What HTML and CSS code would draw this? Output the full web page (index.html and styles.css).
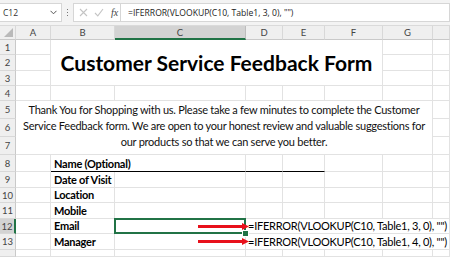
FILE: index.html
```html
<!DOCTYPE html>
<html>
<head>
<meta charset="utf-8">
<link rel="stylesheet" href="styles.css">
</head>
<body>
<div class="fbar">
  <div class="namebox"><span>C12</span><svg class="chev" width="7" height="5" viewBox="0 0 7 5"><path d="M0.5 0.8 L3.5 3.8 L6.5 0.8" fill="none" stroke="#555" stroke-width="1"/></svg></div>
  <div class="dots"><i></i><i></i><i></i></div>
  <div class="fbtns">
    <svg width="9" height="9" viewBox="0 0 9 9"><path d="M1 1 L8 8 M8 1 L1 8" stroke="#c4c4c4" stroke-width="1.1" fill="none"/></svg>
    <svg width="10" height="9" viewBox="0 0 10 9"><path d="M1 5 L3.8 7.8 L9 1" stroke="#c4c4c4" stroke-width="1.1" fill="none"/></svg>
    <span class="fx">fx</span>
  </div>
  <div class="finput">=IFERROR(VLOOKUP(C10, Table1, 3, 0), "")</div>
</div>
<div class="sheet">
  <div class="h corner"><span class="tri"></span></div>
  <div class="h">A</div><div class="h">B</div><div class="h sel">C</div><div class="h">D</div><div class="h">E</div><div class="h">F</div><div class="h">G</div><div class="h"></div>

  <div class="r">1</div><div class="c"></div><div class="c title">Customer Service Feedback Form</div><div class="c"></div><div class="c"></div>
  <div class="r">2</div><div class="c"></div><div class="c"></div><div class="c"></div>
  <div class="r">3</div><div class="c"></div><div class="c"></div><div class="c"></div>
  <div class="r">4</div><div class="c"></div><div class="c"></div><div class="c"></div><div class="c"></div><div class="c"></div><div class="c"></div><div class="c"></div><div class="c"></div>

  <div class="r">5</div><div class="c para">Thank You for Shopping with us. Please take a few minutes to complete the Customer<br>Service Feedback form. We are open to your honest review and valuable suggestions for<br>our products so that we can serve you better.</div><div class="c"></div>
  <div class="r">6</div><div class="c"></div>
  <div class="r">7</div><div class="c"></div>

  <div class="r">8</div><div class="c"></div><div class="c lbl ul span2">Name (Optional)</div><div class="c ul"></div><div class="c ul"></div><div class="c"></div><div class="c"></div><div class="c"></div>
  <div class="r">9</div><div class="c"></div><div class="c lbl">Date of Visit</div><div class="c"></div><div class="c"></div><div class="c"></div><div class="c"></div><div class="c"></div><div class="c"></div>
  <div class="r">10</div><div class="c"></div><div class="c lbl">Location</div><div class="c"></div><div class="c"></div><div class="c"></div><div class="c"></div><div class="c"></div><div class="c"></div>
  <div class="r">11</div><div class="c"></div><div class="c lbl">Mobile</div><div class="c"></div><div class="c"></div><div class="c"></div><div class="c"></div><div class="c"></div><div class="c"></div>
  <div class="r rsel">12</div><div class="c"></div><div class="c lbl">Email</div><div class="c active"><span class="handle"></span></div><div class="c formula">=IFERROR(VLOOKUP(C10, Table1, 3, 0), "")</div>
  <div class="r">13</div><div class="c"></div><div class="c lbl">Manager</div><div class="c"></div><div class="c formula">=IFERROR(VLOOKUP(C10, Table1, 4, 0), "")</div>
  <div class="r"></div><div class="c"></div><div class="c"></div><div class="c"></div><div class="c"></div><div class="c"></div><div class="c"></div><div class="c"></div><div class="c"></div>

  <svg class="arrows" width="60" height="30" viewBox="0 0 60 30">
    <path d="M0 3.5 H48" stroke="#e8101b" stroke-width="3"/>
    <path d="M44 0 L51 3.5 L44 7 Z" fill="#e8101b"/>
    <path d="M0 18.5 H48" stroke="#e8101b" stroke-width="3"/>
    <path d="M44 15 L51 18.5 L44 22 Z" fill="#e8101b"/>
  </svg>
</div>
</body>
</html>
```
FILE: styles.css
```css
html, body {
  margin: 0;
  padding: 0;
  width: 450px;
  height: 257px;
  overflow: hidden;
  background: #fff;
  font-family: Lato, "Liberation Sans", sans-serif;
}

.fbar {
  display: flex;
  height: 26px;
  box-sizing: border-box;
  padding: 3px 0 3px 0;
  background: #f3f3f3;
  border-bottom: 1px solid #dadada;
  font-family: "Open Sans", "Liberation Sans", sans-serif;
}

.namebox {
  width: 62px;
  box-sizing: border-box;
  background: #fff;
  border: 1px solid #d6d6d6;
  border-left: none;
  display: flex;
  align-items: center;
  justify-content: space-between;
  padding: 0 4px 0 3px;
  font-size: 8.5px;
  color: #333;
}

.dots {
  width: 11px;
  display: flex;
  flex-direction: column;
  align-items: center;
  justify-content: center;
  gap: 1.5px;
}
.dots i {
  width: 1.5px;
  height: 1.5px;
  background: #777;
  display: block;
}

.fbtns {
  width: 47px;
  box-sizing: border-box;
  background: #fff;
  border: 1px solid #d6d6d6;
  border-right: none;
  display: flex;
  align-items: center;
  gap: 6px;
  padding-left: 5px;
}
.fx {
  font-family: "Liberation Serif", serif;
  font-style: italic;
  font-size: 10px;
  color: #444;
  margin-left: 1px;
}

.finput {
  flex: 1;
  min-width: 0;
  overflow: hidden;
  background: #fff;
  border: 1px solid #d6d6d6;
  display: flex;
  align-items: center;
  padding-left: 7px;
  font-size: 8.6px;
  color: #222;
  white-space: nowrap;
}

.sheet {
  position: relative;
  display: grid;
  grid-template-columns: 16px 35px 64px 131px 37px 42px 58px 50px 17px;
  grid-template-rows: 14px 15px 16px 15px 15px 18px 18px 18px 17px 16px 15px 16px 15px 16px 7px;
  overflow: hidden;
}

.h {
  box-sizing: border-box;
  background: #efefef;
  border-right: 1px solid #d8d8d8;
  border-bottom: 1px solid #c9c9c9;
  display: flex;
  align-items: center;
  justify-content: center;
  font-size: 9.5px;
  color: #444;
}
.h.sel {
  background: #d3d3d3;
  border-bottom: 2px solid #217346;
  border-right-color: #bdbdbd;
}
.corner {
  position: relative;
}
.tri {
  position: absolute;
  right: 2px;
  bottom: 2px;
  width: 0;
  height: 0;
  border-left: 9px solid transparent;
  border-bottom: 9px solid #b9b9b9;
}

.r {
  box-sizing: border-box;
  background: #efefef;
  border-right: 1px solid #c9c9c9;
  border-bottom: 1px solid #d8d8d8;
  display: flex;
  align-items: center;
  justify-content: center;
  font-size: 9.5px;
  color: #444;
}
.r.rsel {
  background: #d3d3d3;
  border-right: 2px solid #217346;
}

.c {
  box-sizing: border-box;
  border-right: 1px solid #e2e2e2;
  border-bottom: 1px solid #e2e2e2;
  display: flex;
  align-items: flex-end;
  padding: 0 2px 1px 3px;
  white-space: nowrap;
  font-size: 11px;
  letter-spacing: -0.25px;
  color: #000;
  min-width: 0;
}

.title {
  grid-column: span 5;
  grid-row: span 3;
  align-items: center;
  justify-content: center;
  font-size: 21px;
  letter-spacing: 0;
  font-weight: bold;
  padding: 0;
}

.para {
  grid-column: span 7;
  grid-row: span 3;
  white-space: nowrap;
  text-align: center;
  justify-content: center;
  align-items: flex-start;
  padding: 1px 0 0 0;
  line-height: 16px;
  color: #111;
}

.lbl {
  font-weight: bold;
}
.span2 {
  grid-column: span 2;
}
.ul {
  border-bottom-color: #000;
}

.active {
  position: relative;
}
.active::after {
  content: "";
  position: absolute;
  left: -1px;
  top: -1px;
  right: -1px;
  bottom: -1px;
  border: 2px solid #217346;
}
.handle {
  position: absolute;
  right: -4px;
  bottom: -4px;
  width: 5px;
  height: 5px;
  background: #217346;
  border: 1px solid #fff;
  z-index: 2;
}

.formula {
  grid-column: span 5;
  padding-left: 2px;
}

.arrows {
  position: absolute;
  left: 198px;
  top: 197px;
}
```
